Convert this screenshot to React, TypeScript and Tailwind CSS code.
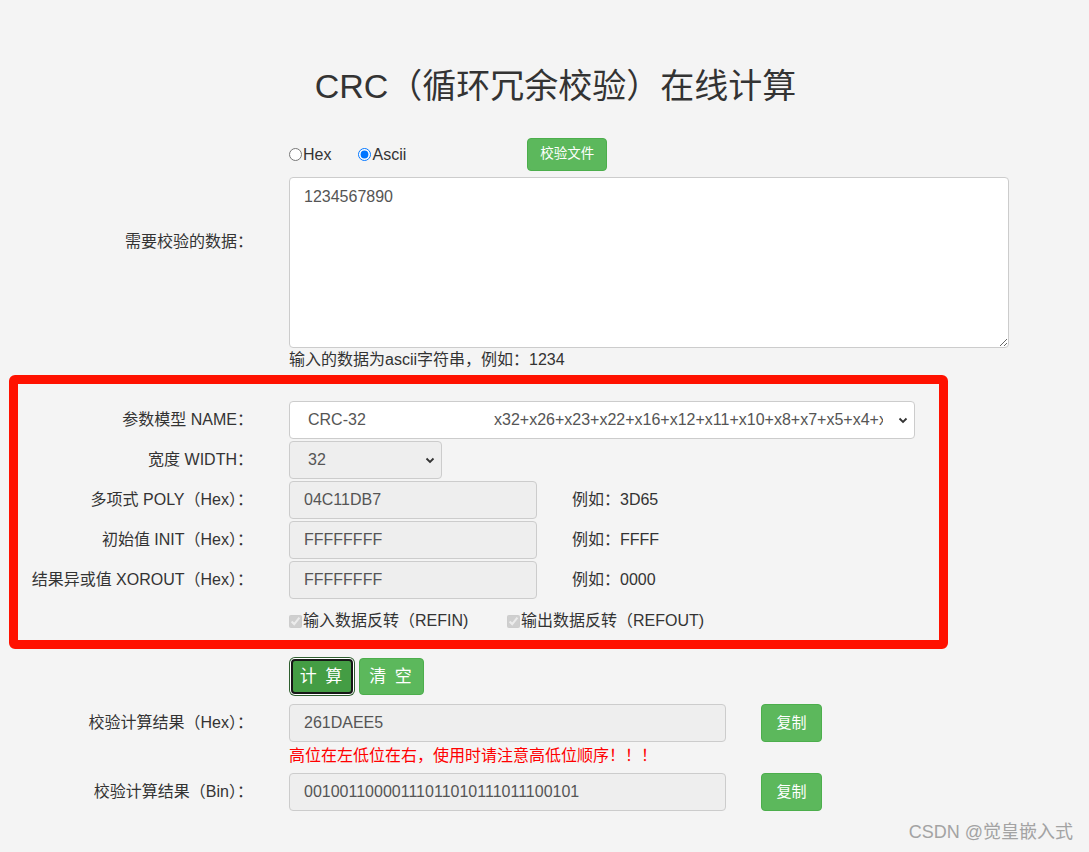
import React from 'react'

// Shared text stack: Arial-width Latin, CJK fallback
const FONT = "font-['Liberation_Sans','Noto_Sans_CJK_SC',sans-serif]"

function Chevron() {
  return (
    <svg width="10" height="7" viewBox="0 0 10 7" className="shrink-0">
      <polyline points="1.5,1.5 5,5 8.5,1.5" fill="none" stroke="#333" strokeWidth="1.8" />
    </svg>
  )
}

function Row({ label, children, className = '' }: { label: string; children: React.ReactNode; className?: string }) {
  return (
    <div className={`flex items-center ${className}`}>
      <div className="w-[253px] shrink-0 text-right text-[16px] text-[#333] whitespace-nowrap">{label}</div>
      <div className="ml-[36px] flex items-center">{children}</div>
    </div>
  )
}

function ReadBox({ value, width }: { value: string; width: string }) {
  return (
    <div className={`${width} h-[38px] flex items-center pl-[14px] bg-[#eeeeee] border border-[#cccccc] rounded-[4px] text-[16px] text-[#555]`}>
      {value}
    </div>
  )
}

function GreenButton({ children, className = '' }: { children: React.ReactNode; className?: string }) {
  return (
    <button
      type="button"
      className={`flex items-center justify-center bg-[#5cb85c] border border-[#4cae4c] rounded-[4px] text-white ${className}`}
    >
      {children}
    </button>
  )
}

export default function App() {
  return (
    <div className={`relative min-h-[852px] w-full bg-[#f4f4f4] ${FONT}`}>
      <h1 className="pt-[62px] pl-[22px] text-center text-[34px] leading-[48px] text-[#333] font-normal">
        CRC（循环冗余校验）在线计算
      </h1>

      {/* Input type + file check */}
      <div className="mt-[28px] ml-[289px] h-[33px] flex items-center text-[16px] text-[#333]">
        <label className="flex items-center">
          <input type="radio" name="fmt" className="m-0 w-[13px] h-[13px]" />
          <span className="ml-[1px]">Hex</span>
        </label>
        <label className="flex items-center ml-[27px]">
          <input type="radio" name="fmt" defaultChecked className="m-0 w-[13px] h-[13px]" />
          <span className="ml-[1px]">Ascii</span>
        </label>
        <GreenButton className="ml-[121px] w-[80px] h-[33px] text-[13.5px]">校验文件</GreenButton>
      </div>

      {/* Data */}
      <div className="mt-[6px] flex items-start">
        <div className="w-[253px] shrink-0 pt-[55px] text-right text-[16px] leading-[20px] text-[#333]">需要校验的数据：</div>
        <textarea
          readOnly
          defaultValue="1234567890"
          className="ml-[36px] w-[720px] h-[171px] px-[14px] pt-[9px] bg-white border border-[#cccccc] rounded-[4px] text-[16px] leading-[20px] text-[#555] outline-none"
        />
      </div>
      <div className="mt-[2px] ml-[289px] text-[16px] leading-[20px] text-[#333]">输入的数据为ascii字符串，例如：1234</div>

      {/* Parameters */}
      <Row label="参数模型 NAME：" className="mt-[31px]">
        <div className="w-[626px] h-[38px] flex items-center pl-[18px] pr-[6px] bg-white border border-[#cccccc] rounded-[4px] text-[16px] text-[#555]">
          <div className="w-[575px] overflow-hidden whitespace-nowrap">
            <span className="inline-block w-[186px]">CRC-32</span>
            <span>x32+x26+x23+x22+x16+x12+x11+x10+x8+x7+x5+x4+x2+x+1</span>
          </div>
          <div className="ml-auto"><Chevron /></div>
        </div>
      </Row>
      <Row label="宽度 WIDTH：" className="mt-[2px]">
        <div className="w-[153px] h-[38px] flex items-center pl-[18px] pr-[6px] bg-[#eeeeee] border border-[#cccccc] rounded-[4px] text-[16px] text-[#555]">
          <span>32</span>
          <div className="ml-auto"><Chevron /></div>
        </div>
      </Row>
      <Row label="多项式 POLY（Hex）：" className="mt-[2px]">
        <ReadBox value="04C11DB7" width="w-[248px]" />
        <span className="ml-[35px] text-[16px] text-[#333]">例如：3D65</span>
      </Row>
      <Row label="初始值 INIT（Hex）：" className="mt-[2px]">
        <ReadBox value="FFFFFFFF" width="w-[248px]" />
        <span className="ml-[35px] text-[16px] text-[#333]">例如：FFFF</span>
      </Row>
      <Row label="结果异或值 XOROUT（Hex）：" className="mt-[2px]">
        <ReadBox value="FFFFFFFF" width="w-[248px]" />
        <span className="ml-[35px] text-[16px] text-[#333]">例如：0000</span>
      </Row>

      <div className="mt-[12px] ml-[289px] h-[20px] flex items-center text-[16px] text-[#333]">
        <label className="flex items-center w-[218px]">
          <input type="checkbox" disabled defaultChecked className="m-0 w-[13px] h-[13px]" />
          <span className="ml-[1px]">输入数据反转（REFIN)</span>
        </label>
        <label className="flex items-center">
          <input type="checkbox" disabled defaultChecked className="m-0 w-[13px] h-[13px]" />
          <span className="ml-[1px]">输出数据反转（REFOUT)</span>
        </label>
      </div>

      {/* Actions */}
      <div className="mt-[27px] ml-[291px] h-[37px] flex items-center">
        <button
          type="button"
          className="w-[62px] h-[35px] flex items-center justify-center bg-[#449d44] border-2 border-[#161616] rounded-[4px] text-white text-[17px] tracking-[2px] shadow-[0_0_0_1px_#ffffff,0_0_0_2px_#2f5f2f]"
        >
          计 算
        </button>
        <GreenButton className="ml-[6px] w-[65px] h-[37px] text-[17px] tracking-[2px]">清 空</GreenButton>
      </div>

      {/* Results */}
      <Row label="校验计算结果（Hex）：" className="mt-[9px]">
        <ReadBox value="261DAEE5" width="w-[437px]" />
        <GreenButton className="ml-[35px] w-[61px] h-[38px] text-[15px]">复制</GreenButton>
      </Row>
      <div className="mt-[4px] ml-[289px] text-[16px] leading-[20px] text-[#ff0000]">
        高位在左低位在右，使用时请注意高低位顺序！！！
      </div>
      <Row label="校验计算结果（Bin）：" className="mt-[7px]">
        <ReadBox value="00100110000111011010111011100101" width="w-[437px]" />
        <GreenButton className="ml-[35px] w-[61px] h-[38px] text-[15px]">复制</GreenButton>
      </Row>

      {/* Annotation box drawn over the parameter section */}
      <div className="pointer-events-none absolute left-[9px] top-[375px] w-[939px] h-[274px] border-[9px] border-[#ff1100] rounded-[6px]" />

      {/* Watermark */}
      <div className="absolute right-[16px] top-[821px] text-[18px] leading-[22px] text-[#a3a3a3]">CSDN @觉皇嵌入式</div>
    </div>
  )
}
